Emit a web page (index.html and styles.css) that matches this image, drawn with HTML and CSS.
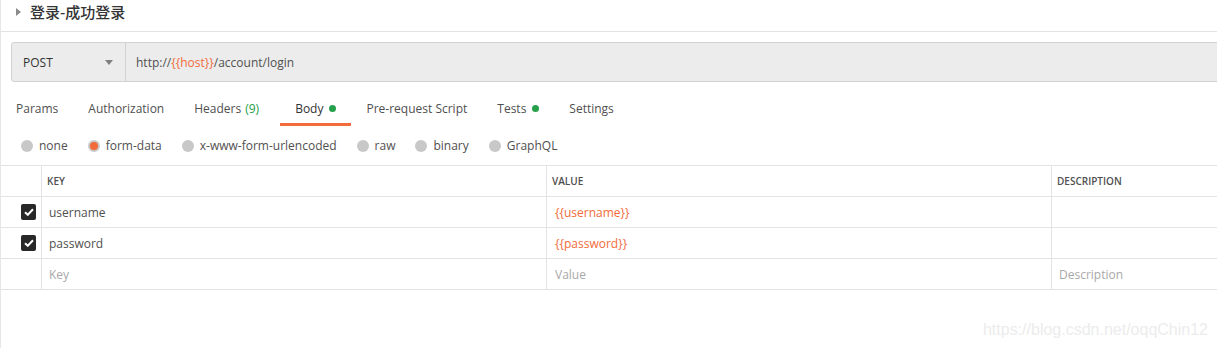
FILE: index.html
```html
<!DOCTYPE html>
<html lang="zh-CN">
<head>
    <meta charset="UTF-8">
    <title>登录-成功登录</title>
    <link rel="stylesheet" href="styles.css">
</head>
<body>

    <div class="page">
        <div class="title-row">
            <span class="caret"></span>
            <span class="title">登录-成功登录</span>
        </div>

        <div class="url-bar">
            <div class="method">
                <span>POST</span>
                <span class="method-arrow"></span>
            </div>
            <div class="url">http://<span class="var">{{host}}</span>/account/login</div>
        </div>

        <div class="tabs">
            <span class="tab">Params</span>
            <span class="tab">Authorization</span>
            <span class="tab">Headers <span class="count">(9)</span></span>
            <span class="tab active">Body <span class="dot"></span></span>
            <span class="tab">Pre-request Script</span>
            <span class="tab">Tests <span class="dot"></span></span>
            <span class="tab">Settings</span>
        </div>

        <div class="body-types">
            <span class="radio-item"><span class="radio"></span>none</span>
            <span class="radio-item"><span class="radio checked"></span>form-data</span>
            <span class="radio-item"><span class="radio"></span>x-www-form-urlencoded</span>
            <span class="radio-item"><span class="radio"></span>raw</span>
            <span class="radio-item"><span class="radio"></span>binary</span>
            <span class="radio-item"><span class="radio"></span>GraphQL</span>
        </div>

        <div class="params">
            <div class="row head">
                <div class="cell check"></div>
                <div class="cell key">KEY</div>
                <div class="cell value">VALUE</div>
                <div class="cell desc">DESCRIPTION</div>
            </div>
            <div class="row">
                <div class="cell check"><span class="checkbox"><svg width="10" height="8" viewBox="0 0 10 8"><path d="M1 4.2 L3.8 6.8 L9 1.2" fill="none" stroke="#fff" stroke-width="2"/></svg></span></div>
                <div class="cell key">username</div>
                <div class="cell value var">{{username}}</div>
                <div class="cell desc"></div>
            </div>
            <div class="row">
                <div class="cell check"><span class="checkbox"><svg width="10" height="8" viewBox="0 0 10 8"><path d="M1 4.2 L3.8 6.8 L9 1.2" fill="none" stroke="#fff" stroke-width="2"/></svg></span></div>
                <div class="cell key">password</div>
                <div class="cell value var">{{password}}</div>
                <div class="cell desc"></div>
            </div>
            <div class="row">
                <div class="cell check"></div>
                <div class="cell key placeholder">Key</div>
                <div class="cell value placeholder">Value</div>
                <div class="cell desc placeholder">Description</div>
            </div>
        </div>

        <div class="watermark">https://blog.csdn.net/oqqChin12</div>
    </div>

</body>
</html>
```

FILE: styles.css
```css
body {
    margin: 0;
    padding: 0;
    background-color: #fff;
    font-family: 'Open Sans', 'Noto Sans CJK SC', sans-serif;
    font-size: 12px;
    color: #505050;
    overflow: hidden;
}

.page {
    position: relative;
    height: 348px;
    border-left: 1px solid #e6e6e6;
}

.title-row {
    display: flex;
    align-items: center;
    height: 31px;
    padding-left: 15px;
    border-bottom: 1px solid #e3e3e3;
}

.caret {
    width: 0;
    height: 0;
    border-top: 4px solid transparent;
    border-bottom: 4px solid transparent;
    border-left: 5px solid #8a8a8a;
    margin-right: 9px;
    margin-top: -7px;
}

.title {
    font-family: 'Noto Sans CJK SC', sans-serif;
    font-size: 15px;
    font-weight: 500;
    color: #333;
    margin-top: -9px;
}

.url-bar {
    display: flex;
    height: 38px;
    margin: 10px 0 0 10px;
    width: 1400px;
    background-color: #ececec;
    border: 1px solid #d2d2d2;
    border-radius: 3px;
}

.method {
    display: flex;
    align-items: center;
    justify-content: space-between;
    width: 114px;
    box-sizing: border-box;
    padding: 0 12px 0 11px;
    border-right: 1px solid #d2d2d2;
    color: #333;
}

.method-arrow {
    width: 0;
    height: 0;
    border-left: 4px solid transparent;
    border-right: 4px solid transparent;
    border-top: 5px solid #808080;
}

.url {
    display: flex;
    align-items: center;
    padding-left: 10px;
    color: #505050;
}

.var {
    color: #f26b3a;
}

.tabs {
    display: flex;
    height: 43px;
    margin-top: 1px;
}

.tab {
    display: flex;
    align-items: center;
    padding: 11px 15px 0;
    border-bottom: 3px solid transparent;
    color: #505050;
}

.tab.active {
    border-bottom-color: #f26b3a;
    color: #333;
}

.count {
    color: #26a04a;
    margin-left: 4px;
    margin-right: 6px;
}

.dot {
    display: inline-block;
    width: 7px;
    height: 7px;
    border-radius: 50%;
    background-color: #26a04a;
    margin-left: 6px;
}

.body-types {
    display: flex;
    align-items: center;
    height: 39px;
    padding-left: 20px;
}

.radio-item {
    display: flex;
    align-items: center;
    margin-right: 20px;
    color: #505050;
}

.radio {
    width: 12px;
    height: 12px;
    border-radius: 50%;
    background-color: #c8c8c8;
    margin-right: 6px;
    box-sizing: border-box;
}

.radio.checked {
    background-color: #f26b3a;
    border: 2px solid #c8c8c8;
}

.params {
    width: 1400px;
    border-top: 1px solid #e3e3e3;
}

.row {
    display: flex;
    height: 30px;
    border-bottom: 1px solid #e3e3e3;
}

.cell {
    display: flex;
    align-items: center;
    box-sizing: border-box;
    border-right: 1px solid #e3e3e3;
}

.cell.check {
    width: 41px;
    justify-content: flex-end;
    padding-right: 5px;
}

.cell.key {
    width: 505px;
    padding-left: 7px;
}

.cell.value {
    width: 505px;
    padding-left: 8px;
}

.cell.desc {
    flex: 1;
    padding-left: 7px;
}

.head .cell {
    font-size: 10px;
    font-weight: 600;
    color: #505050;
    padding-left: 5px;
}

.placeholder {
    color: #a8a8a8;
}

.checkbox {
    display: flex;
    align-items: center;
    justify-content: center;
    width: 15px;
    height: 16px;
    border-radius: 2px;
    background-color: #282828;
}

.watermark {
    position: absolute;
    right: 9px;
    bottom: 9px;
    font-family: 'Liberation Sans', Arial, sans-serif;
    font-size: 16px;
    color: #ececec;
}
```
